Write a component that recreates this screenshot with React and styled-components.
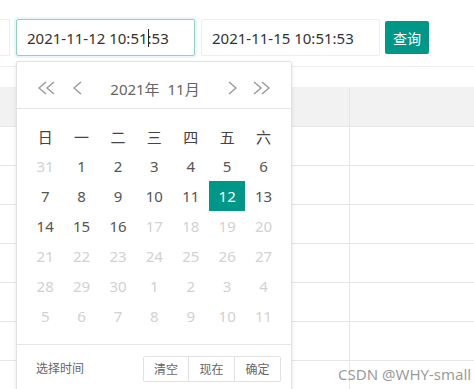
import React from "react";
import styled, { createGlobalStyle } from "styled-components";

const Global = createGlobalStyle`
  html, body { margin: 0; padding: 0; background: #fff; }
  body { font-family: "Noto Sans", "Noto Sans CJK SC", sans-serif; overflow: hidden; }
  * { box-sizing: border-box; }
`;

const Page = styled.div`
  position: relative;
  width: 474px;
  height: 389px;
  overflow: hidden;
  background: #fff;
`;

const Toolbar = styled.div`
  display: flex;
  align-items: center;
  gap: 6px;
  padding-top: 19px;
  padding-bottom: 10px;
  border-bottom: 1px solid #eee;
  width: 474px;
`;

const Stub = styled.div`
  width: 10px;
  height: 37px;
  border: 1px solid #eee;
  border-left: none;
  flex: none;
`;

const Input = styled.div`
  width: 179px;
  height: 37px;
  flex: none;
  display: flex;
  align-items: center;
  padding-left: 10px;
  border: 1px solid ${(p) => (p.$focus ? "#93cfc2" : "#eee")};
  box-shadow: ${(p) => (p.$focus ? "0 0 0 2px rgba(150, 205, 225, 0.18)" : "none")};
  border-radius: 2px;
  font-size: 15px;
  color: #333;
  white-space: nowrap;
`;

const Caret = styled.span`
  display: inline-block;
  width: 1px;
  height: 18px;
  background: #222;
  margin-right: -1px;
`;

const SearchButton = styled.div`
  width: 44px;
  height: 33px;
  margin-left: -1px;
  flex: none;
  display: flex;
  align-items: center;
  justify-content: center;
  background: #009688;
  color: #fff;
  border-radius: 2px;
  font-size: 14px;
`;

const Table = styled.div`
  margin-top: 20px;
  width: 474px;
`;

const Row = styled.div`
  display: grid;
  grid-template-columns: 350px 1fr;
  height: ${(p) => (p.$head ? "40px" : "39px")};
  background: ${(p) => (p.$head ? "#f2f2f2" : "#fff")};
  border-bottom: 1px solid #e6e6e6;
`;

const Cell = styled.div`
  border-right: 1px solid #e6e6e6;
`;

const Popup = styled.div`
  position: absolute;
  left: 16px;
  top: 61px;
  width: 276px;
  height: 340px;
  background: #fff;
  border: 1px solid #e2e2e2;
  border-radius: 2px;
  box-shadow: 0 2px 4px rgba(0, 0, 0, 0.1);
`;

const Header = styled.div`
  height: 47px;
  border-bottom: 1px solid #e6e6e6;
  display: flex;
  align-items: center;
  padding-top: 6px;
  padding-left: 21px;
  padding-right: 20px;
  color: #666;
`;

const NavIcon = styled.span`
  display: flex;
  align-items: center;
  justify-content: center;
  width: ${(p) => p.$w}px;
  margin-left: ${(p) => p.$ml || 0}px;
`;

const Title = styled.div`
  flex: 1;
  text-align: center;
  font-size: 15px;
  color: #666;
  word-spacing: 4px;
`;

const Grid = styled.div`
  display: grid;
  grid-template-columns: repeat(7, 36.4px);
  grid-auto-rows: 30px;
  margin: 12px 0 13px 10px;
`;

const Day = styled.div`
  display: flex;
  align-items: center;
  justify-content: center;
  font-size: 15px;
  color: ${(p) => (p.$sel ? "#fff" : p.$dim ? "#d2d2d2" : p.$week ? "#444" : "#555")};
  background: ${(p) => (p.$sel ? "#009688" : "transparent")};
`;

const Footer = styled.div`
  border-top: 1px solid #e6e6e6;
  height: 46px;
  display: flex;
  align-items: center;
  padding-left: 19px;
  padding-right: 10px;
`;

const FooterLabel = styled.div`
  flex: 1;
  font-size: 12px;
  color: #666;
`;

const BtnGroup = styled.div`
  display: flex;
  margin-top: 2px;
`;

const FBtn = styled.div`
  width: ${(p) => p.$w || 46}px;
  height: 26px;
  display: flex;
  align-items: center;
  justify-content: center;
  border: 1px solid #e2e2e2;
  margin-left: -1px;
  font-size: 12px;
  color: #666;
  &:first-child { border-radius: 2px 0 0 2px; margin-left: 0; }
  &:last-child { border-radius: 0 2px 2px 0; }
`;

const Watermark = styled.div`
  position: absolute;
  left: 338px;
  top: 364px;
  font-size: 15px;
  color: rgba(120, 120, 120, 0.75);
  white-space: nowrap;
`;

const Chev = ({ dir, double }) => {
  const w = double ? 18 : 9;
  const pts = (x) =>
    dir === "left" ? `${x + 7},1 ${x},7 ${x + 7},13` : `${x},1 ${x + 7},7 ${x},13`;
  return (
    <svg width={w} height="14" viewBox={`0 0 ${w} 14`}>
      <polyline points={pts(1)} fill="none" stroke="#999" strokeWidth="1.4" />
      {double && <polyline points={pts(9)} fill="none" stroke="#999" strokeWidth="1.4" />}
    </svg>
  );
};

const weeks = ["日", "一", "二", "三", "四", "五", "六"];
const days = [];
days.push({ n: 31, dim: true });
for (let i = 1; i <= 30; i++) days.push({ n: i, dim: i > 16, sel: i === 12 });
for (let i = 1; i <= 11; i++) days.push({ n: i, dim: true });

export default function App() {
  return (
    <Page>
      <Global />
      <Toolbar>
        <Stub />
        <Input $focus>
          2021-11-12 10:51<Caret />:53
        </Input>
        <Input>2021-11-15 10:51:53</Input>
        <SearchButton>查询</SearchButton>
      </Toolbar>
      <Table>
        {[true, false, false, false, false, false, false, false].map((h, i) => (
          <Row key={i} $head={h}>
            <Cell />
            <div />
          </Row>
        ))}
      </Table>
      <Popup>
        <Header>
          <NavIcon $w={18}><Chev dir="left" double /></NavIcon>
          <NavIcon $w={9} $ml={17}><Chev dir="left" /></NavIcon>
          <Title>2021年 11月</Title>
          <NavIcon $w={9}><Chev dir="right" /></NavIcon>
          <NavIcon $w={18} $ml={16}><Chev dir="right" double /></NavIcon>
        </Header>
        <Grid>
          {weeks.map((w) => (
            <Day key={w} $week>{w}</Day>
          ))}
          {days.map((d, i) => (
            <Day key={i} $dim={d.dim} $sel={d.sel}>{d.n}</Day>
          ))}
        </Grid>
        <Footer>
          <FooterLabel>选择时间</FooterLabel>
          <BtnGroup>
            <FBtn $w={46}>清空</FBtn>
            <FBtn $w={47}>现在</FBtn>
            <FBtn $w={47}>确定</FBtn>
          </BtnGroup>
        </Footer>
      </Popup>
      <Watermark>CSDN @WHY-small</Watermark>
    </Page>
  );
}
